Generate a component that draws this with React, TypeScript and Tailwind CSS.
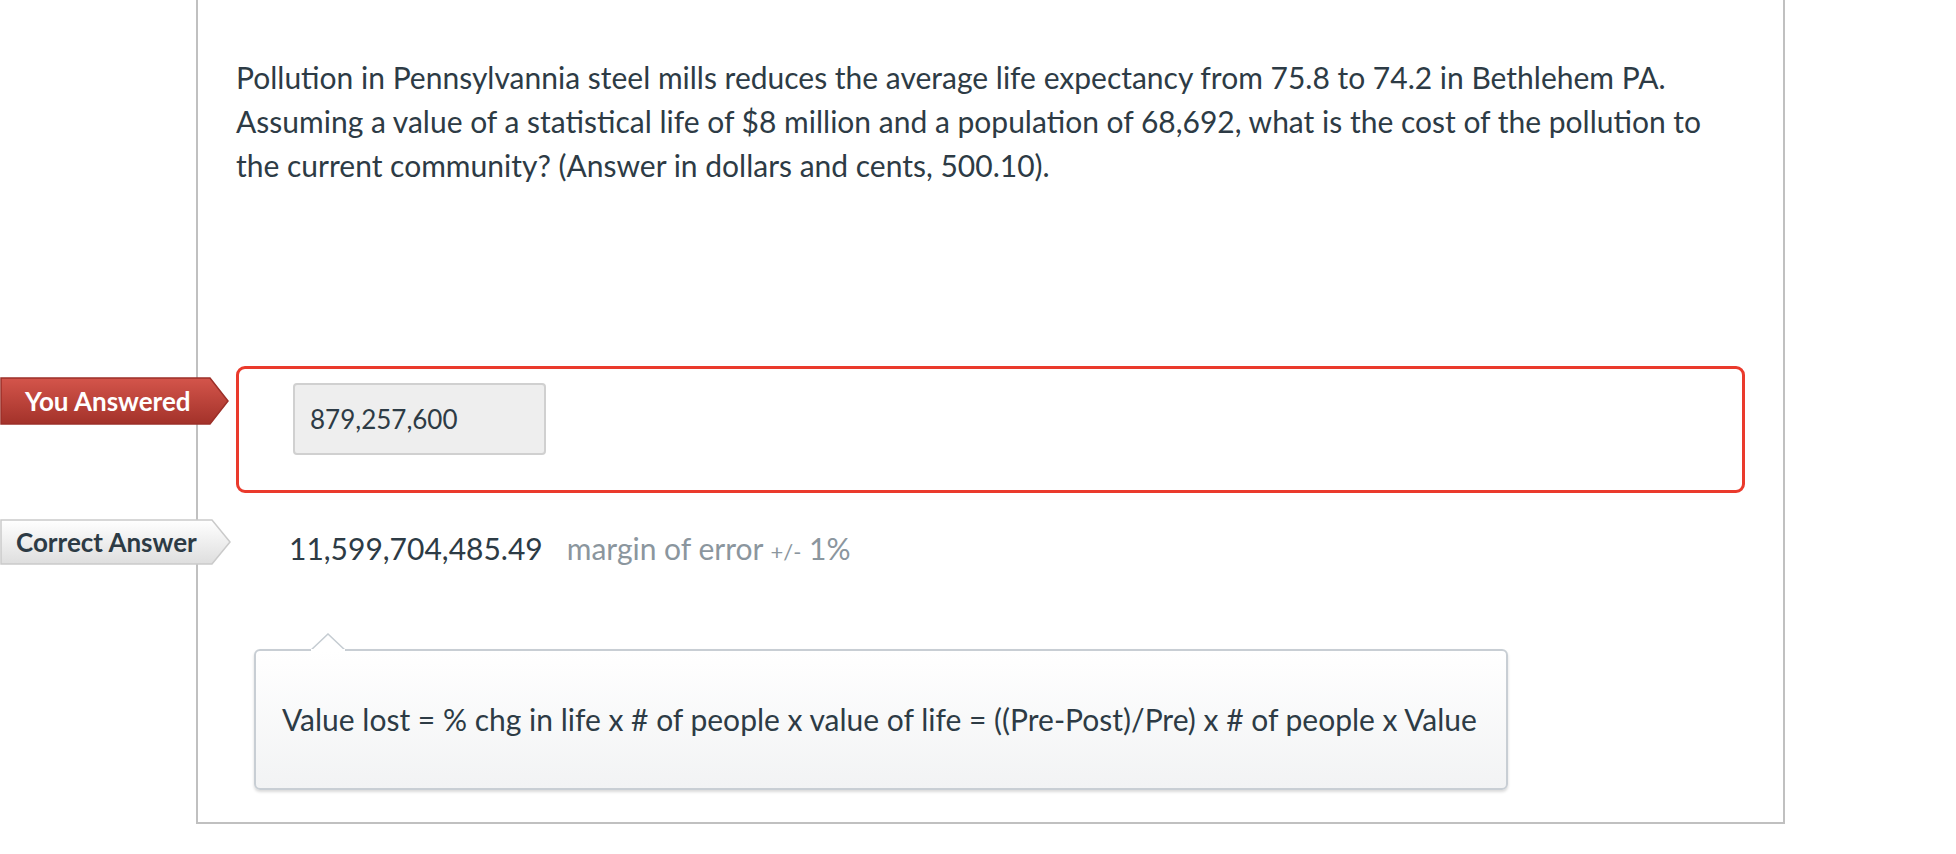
import React from 'react';

const FONT = 'font-["Lato","Open_Sans","Liberation_Sans",sans-serif]';

function AnswerLabel({ text, variant }: { text: string; variant: 'wrong' | 'correct' }) {
  const wrong = variant === 'wrong';
  const h = wrong ? 48 : 46;
  const body = wrong ? 210 : 212;
  return (
    <div className={`relative w-[232px] ${wrong ? 'h-[48px]' : 'h-[46px]'}`}>
      <svg width="232" height={h} viewBox={`0 0 232 ${h}`} className="absolute inset-0">
        <defs>
          <linearGradient id={`lbl-${variant}`} x1="0" y1="0" x2="0" y2="1">
            {wrong ? (
              <>
                <stop offset="0" stopColor="#d4554b" />
                <stop offset="1" stopColor="#a3322a" />
              </>
            ) : (
              <>
                <stop offset="0" stopColor="#ffffff" />
                <stop offset="1" stopColor="#dedede" />
              </>
            )}
          </linearGradient>
        </defs>
        <polygon
          points={`1,1 ${body},1 ${body + 18},${h / 2} ${body},${h - 1} 1,${h - 1}`}
          fill={`url(#lbl-${variant})`}
          stroke={wrong ? '#9c2f28' : '#cacaca'}
          strokeWidth="1.5"
        />
      </svg>
      <span
        className={`relative flex h-full items-center text-[26px] font-bold ${wrong ? 'pl-[25px] text-white' : 'pl-[16px] text-[#2d3b45]'}`}
      >
        {text}
      </span>
    </div>
  );
}

export default function App() {
  return (
    <div className={`w-[1956px] h-[854px] overflow-hidden bg-white text-[#2d3b45] ${FONT}`}>
      <div className="ml-[196px] w-[1589px] h-[824px] border-x-2 border-b-2 border-[#c0c0c0] pl-[38px] pt-[55px]">
        <p className="w-[1509px] text-[30px] leading-[44px]">
          Pollution in Pennsylvannia steel mills reduces the average life expectancy from 75.8 to 74.2 in Bethlehem PA.
          Assuming a value of a statistical life of $8 million and a population of 68,692, what is the cost of the pollution
          to the current community? (Answer in dollars and cents, 500.10).
        </p>

        <div className="relative mt-[179px]">
          <div className="absolute left-[-236px] top-[11px]">
            <AnswerLabel text="You Answered" variant="wrong" />
          </div>
          <div className="w-[1509px] h-[127px] rounded-[9px] border-[3px] border-[#ea3a2c] pl-[54px] pt-[14px]">
            <div className="w-[253px] h-[72px] rounded-[4px] border-2 border-[#d0d0d0] bg-[#eeeeee] flex items-center pl-[15px] text-[26px]">
              879,257,600
            </div>
          </div>
        </div>

        <div className="relative mt-[26px] h-[46px] flex items-center pl-[53px]">
          <div className="absolute left-[-236px] top-0">
            <AnswerLabel text="Correct Answer" variant="correct" />
          </div>
          <span className="text-[30px] pt-[12px]">11,599,704,485.49</span>
          <span className="ml-[24px] text-[30px] pt-[12px] text-[#8b969e]">
            margin of error <span className="text-[22px]">+/-</span> 1%
          </span>
        </div>

        <div className="relative mt-[84px] ml-[18px] w-[1254px]">
          <svg width="36" height="18" viewBox="0 0 36 18" className="absolute left-[56px] top-[-16px]">
            <polygon points="0,18 18,1 36,18" fill="#ffffff" stroke="#c5ccd2" strokeWidth="1.5" />
            <rect x="1" y="16" width="34" height="4" fill="#ffffff" />
          </svg>
          <div className="h-[141px] rounded-[6px] border-2 border-[#c8ced4] bg-gradient-to-b from-white to-[#f2f3f4] shadow-[0_2px_3px_rgba(0,0,0,0.15)] flex items-center pl-[26px] text-[30px]">
            Value lost = % chg in life x # of people x value of life = ((Pre-Post)/Pre) x # of people x Value
          </div>
        </div>
      </div>
    </div>
  );
}
